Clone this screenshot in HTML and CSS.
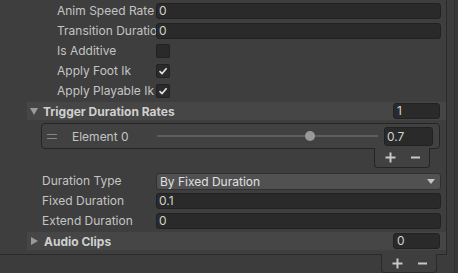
FILE: index.html
```html
<!DOCTYPE html>
<html>
<head>
<title>Inspector</title>
<link rel="stylesheet" href="styles.css">
</head>
<body>
<div class="page">
  <div class="main">
    <div class="panel">
      <div class="row lvl2"><span class="label">Anim Speed Rate</span><div class="field">0</div></div>
      <div class="row lvl2"><span class="label">Transition Duration</span><div class="field">0</div></div>
      <div class="row lvl2"><span class="label">Is Additive</span><div class="check"></div></div>
      <div class="row lvl2"><span class="label">Apply Foot Ik</span>
        <div class="check"><svg width="14" height="14" viewBox="0 0 14 14"><polyline points="3.5,7.2 6,9.6 10.6,4.2" fill="none" stroke="#e6e6e6" stroke-width="1.6"/></svg></div>
      </div>
      <div class="row lvl2"><span class="label">Apply Playable Ik</span>
        <div class="check"><svg width="14" height="14" viewBox="0 0 14 14"><polyline points="3.5,7.2 6,9.6 10.6,4.2" fill="none" stroke="#e6e6e6" stroke-width="1.6"/></svg></div>
      </div>

      <div class="foldout">
        <span class="arrow down"></span>
        <span class="title">Trigger Duration Rates</span>
        <div class="size">1</div>
      </div>
      <div class="list">
        <div class="element">
          <span class="handle"></span>
          <span class="el-label">Element 0</span>
          <div class="slider">
            <div class="track"></div>
            <div class="thumb"></div>
          </div>
          <div class="num">0.7</div>
        </div>
        <div class="footer">
          <span class="btn"><svg width="11" height="11" viewBox="0 0 11 11"><path d="M5.5 0.5v10M0.5 5.5h10" stroke="#c8c8c8" stroke-width="2"/></svg></span>
          <span class="btn"><svg width="11" height="11" viewBox="0 0 11 11"><path d="M1 5.5h9" stroke="#c8c8c8" stroke-width="2"/></svg></span>
        </div>
      </div>

      <div class="row lvl1 first"><span class="label">Duration Type</span>
        <div class="dropdown">By Fixed Duration<span class="caret"></span></div>
      </div>
      <div class="row lvl1"><span class="label">Fixed Duration</span><div class="field">0.1</div></div>
      <div class="row lvl1"><span class="label">Extend Duration</span><div class="field">0</div></div>

      <div class="foldout">
        <span class="arrow right"></span>
        <span class="title">Audio Clips</span>
        <div class="size">0</div>
      </div>
    </div>
    <div class="footer outer">
      <span class="btn"><svg width="11" height="11" viewBox="0 0 11 11"><path d="M5.5 0.5v10M0.5 5.5h10" stroke="#c8c8c8" stroke-width="2"/></svg></span>
      <span class="btn"><svg width="11" height="11" viewBox="0 0 11 11"><path d="M1 5.5h9" stroke="#c8c8c8" stroke-width="2"/></svg></span>
    </div>
  </div>
  <div class="scroll"></div>
</div>
</body>
</html>
```
FILE: styles.css
```css
* {
  box-sizing: border-box;
}
body {
  margin: 0;
  background-color: #3c3c3c;
  font-family: 'Inter', 'Noto Sans', sans-serif;
  font-size: 12px;
  color: #c4c4c4;
  height: 273px;
  overflow: hidden;
}
.page {
  display: flex;
  height: 273px;
}
.main {
  width: 447px;
  display: flex;
  flex-direction: column;
}
.panel {
  background-color: #3e3e3e;
  border-right: 1px solid #2a2a2a;
  border-bottom: 1px solid #2a2a2a;
  padding-top: 1px;
  padding-bottom: 4px;
}
.scroll {
  flex: 1;
  margin-left: 7px;
  border-left: 1px solid #2e2e2e;
  background-color: #383838;
}

/* property rows */
.row {
  display: flex;
  align-items: center;
  height: 20px;
  padding-right: 5px;
}
.row.lvl2 {
  padding-left: 57px;
}
.row.lvl2 .label {
  width: 99px;
}
.row.lvl1 {
  padding-left: 42px;
}
.row.lvl1 .label {
  width: 114px;
}
.row.first {
  margin-top: 3px;
}
.label {
  white-space: nowrap;
  overflow: hidden;
  text-overflow: clip;
  line-height: 20px;
}
.field {
  flex: 1;
  height: 16px;
  background-color: #2a2a2a;
  border: 1px solid #212121;
  border-radius: 3px;
  color: #d2d2d2;
  padding-left: 2px;
  line-height: 14px;
}
.check {
  width: 14px;
  height: 14px;
  background-color: #2a2a2a;
  border: 1px solid #212121;
  border-radius: 2px;
  position: relative;
}
.check svg {
  position: absolute;
  left: -1px;
  top: -1px;
}
.dropdown {
  flex: 1;
  height: 17px;
  background-color: #515151;
  border: 1px solid #303030;
  border-radius: 3px;
  color: #e0e0e0;
  padding-left: 3px;
  line-height: 15px;
  display: flex;
  align-items: center;
  justify-content: space-between;
  padding-right: 5px;
}
.caret {
  width: 0;
  height: 0;
  border-left: 4px solid transparent;
  border-right: 4px solid transparent;
  border-top: 5px solid #c4c4c4;
}

/* foldout headers */
.foldout {
  display: flex;
  align-items: center;
  height: 18px;
  margin-top: 1px;
  margin-left: 27px;
  background-color: #464646;
  padding-left: 3px;
  padding-right: 6px;
}
.arrow {
  width: 0;
  height: 0;
  margin-right: 6px;
}
.arrow.down {
  border-left: 4px solid transparent;
  border-right: 4px solid transparent;
  border-top: 7px solid #9a9a9a;
  margin-right: 5px;
}
.arrow.right {
  border-top: 4px solid transparent;
  border-bottom: 4px solid transparent;
  border-left: 7px solid #9a9a9a;
  margin-left: 1px;
  margin-right: 6px;
}
.title {
  flex: 1;
  font-weight: bold;
  color: #d0d0d0;
}
.size {
  width: 47px;
  height: 16px;
  background-color: #2a2a2a;
  border: 1px solid #212121;
  border-radius: 3px;
  color: #d2d2d2;
  padding-left: 3px;
  line-height: 14px;
}

/* reorderable list */
.list {
  margin: 3px 6px 0 41px;
  display: flex;
  flex-direction: column;
}
.element {
  height: 26px;
  border: 1px solid #242424;
  border-radius: 4px;
  background-color: #414141;
  display: flex;
  align-items: center;
  padding-left: 5px;
  padding-right: 6px;
}
.handle {
  flex: none;
  width: 10px;
  height: 5px;
  border-top: 1px solid #858585;
  border-bottom: 1px solid #858585;
}
.el-label {
  flex: none;
  width: 100px;
  padding-left: 15px;
  color: #c4c4c4;
}
.slider {
  flex: 1;
  height: 12px;
  position: relative;
  margin-right: 6px;
}
.track {
  position: absolute;
  left: 0;
  right: 0;
  top: 5px;
  height: 2px;
  background-color: #5e5e5e;
}
.thumb {
  position: absolute;
  left: calc((100% - 10px) * 0.7);
  top: 1px;
  width: 10px;
  height: 10px;
  border-radius: 50%;
  background-color: #999999;
}
.num {
  flex: none;
  width: 49px;
  height: 19px;
  background-color: #2a2a2a;
  border: 1px solid #212121;
  border-radius: 3px;
  color: #d2d2d2;
  padding-left: 2px;
  line-height: 17px;
}
.footer {
  align-self: flex-end;
  width: 56px;
  height: 20px;
  margin-top: -1px;
  margin-right: 10px;
  background-color: #414141;
  border: 1px solid #242424;
  border-top: none;
  border-radius: 0 0 4px 4px;
  display: flex;
  align-items: center;
  padding-left: 3px;
}
.footer.outer {
  height: 21px;
  background-color: #3e3e3e;
  border-color: #2a2a2a;
}
.btn {
  width: 25px;
  display: flex;
  justify-content: center;
}
```
